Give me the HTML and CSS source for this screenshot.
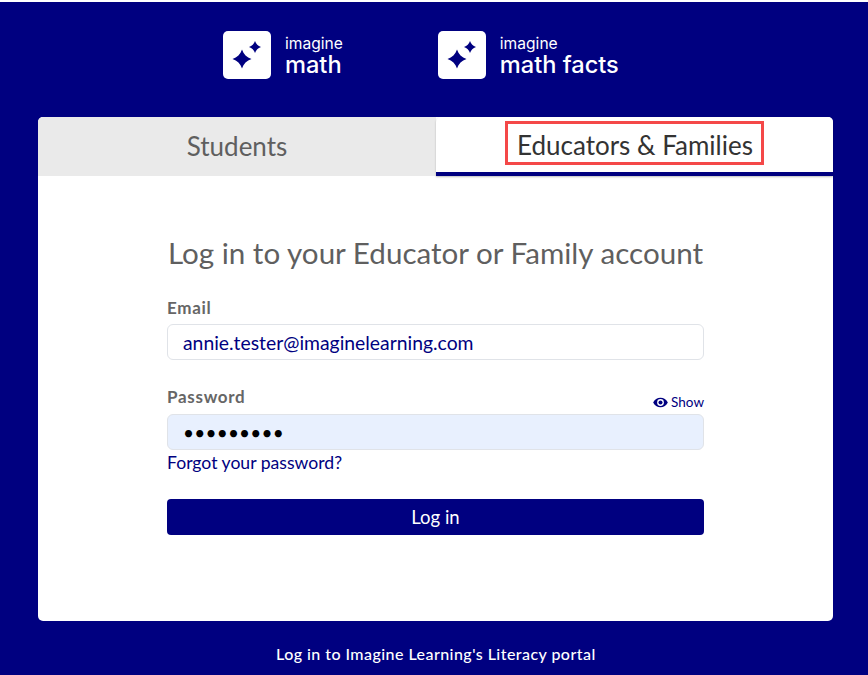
FILE: index.html
```html
<!DOCTYPE html>
<html lang="en">
<head>
<meta charset="utf-8">
<title>Imagine Math Login</title>
<link rel="stylesheet" href="styles.css">
</head>
<body>
<header class="logos">
  <div class="logo">
    <svg class="logo-mark" viewBox="0 0 48 48"><rect width="48" height="48" rx="5" fill="#fff"/><path fill="#000080" d="M19 18.500C20.500 23.200 23.800 26.500 28.500 28C23.800 29.500 20.500 32.800 19 37.500C17.500 32.800 14.200 29.500 9.500 28C14.200 26.500 17.500 23.200 19 18.500zM32 10C33 13 35 15 38 16C35 17 33 19 32 22C31 19 29 17 26 16C29 15 31 13 32 10z"/></svg>
    <div class="logo-text"><span class="logo-small">imagine</span><span class="logo-big">math</span></div>
  </div>
  <div class="logo">
    <svg class="logo-mark" viewBox="0 0 48 48"><rect width="48" height="48" rx="5" fill="#fff"/><path fill="#000080" d="M19 18.500C20.500 23.200 23.800 26.500 28.500 28C23.800 29.500 20.500 32.800 19 37.500C17.500 32.800 14.200 29.500 9.500 28C14.200 26.500 17.500 23.200 19 18.500zM32 10C33 13 35 15 38 16C35 17 33 19 32 22C31 19 29 17 26 16C29 15 31 13 32 10z"/></svg>
    <div class="logo-text"><span class="logo-small">imagine</span><span class="logo-big">math facts</span></div>
  </div>
</header>
<main class="card">
  <nav class="tabs">
    <a class="tab">Students</a>
    <a class="tab tab-active"><span class="highlight">Educators &amp; Families</span></a>
  </nav>
  <form class="form">
    <h1 class="title">Log in to your Educator or Family account</h1>
    <label class="label label-email">Email</label>
    <div class="input">annie.tester@imaginelearning.com</div>
    <div class="pw-row">
      <label class="label">Password</label>
      <a class="show">
        <svg class="eye" viewBox="0 0 16 12"><path fill="#000080" fill-rule="evenodd" d="M8 .8C4.500.8 1.500 3 0 6c1.500 3 4.500 5.200 8 5.200S14.500 9 16 6C14.500 3 11.500.8 8 .8zm0 1.500A3.700 3.700 0 1 1 8 9.700 3.700 3.700 0 0 1 8 2.300z"/><circle cx="8" cy="6" r="2.200" fill="#000080"/></svg>Show</a>
    </div>
    <div class="input input-filled"><span class="dots">•••••••••</span></div>
    <a class="forgot">Forgot your password?</a>
    <button class="submit" type="button">Log in</button>
  </form>
</main>
<footer class="footer">Log in to Imagine Learning's Literacy portal</footer>
</body>
</html>
```
FILE: styles.css
```css
html, body { margin: 0; height: 100%; }
body {
  background: #000080;
  border-top: 2px solid #fff;
  box-sizing: border-box;
  font-family: Lato, "Liberation Sans", sans-serif;
  overflow: hidden;
  display: flex;
  flex-direction: column;
  align-items: flex-start;
  padding-left: 38px;
}
.logos {
  display: flex;
  gap: 95px;
  margin: 29px 0 0 185px;
  height: 48px;
}
.logo { display: flex; align-items: center; gap: 14px; }
.logo-mark { width: 48px; height: 48px; flex: none; }
.logo-text { display: flex; flex-direction: column; margin-top: 4px; color: #fff; font-family: Inter, sans-serif; }
.logo-small { font-size: 15.6px; line-height: 16px; font-weight: 400; }
.logo-big { font-size: 23.6px; line-height: 26px; font-weight: 500; white-space: nowrap; }
.card {
  width: 795px;
  height: 504px;
  margin-top: 38px;
  background: #fff;
  border-radius: 5px;
  flex: none;
}
.tabs { display: flex; height: 59px; }
.tab {
  flex: 1;
  display: flex;
  align-items: center;
  justify-content: center;
  font-size: 26px;
  color: #5f5f5f;
  background: #eaeaea;
  box-sizing: border-box;
  border-radius: 5px 0 0 0;
  padding-bottom: 2px;
}
.tab-active {
  background: #fff;
  color: #333;
  border-bottom: 4px solid #000080;
  border-radius: 5px 5px 0 0;
  flex: 0 0 397px;
  padding-bottom: 0;
  box-shadow: 0 1px 2px rgba(0, 0, 0, .25);
}
.highlight {
  border: 3px solid #f44848;
  padding: 4px 8px 0 9px;
  line-height: 34px;
  margin-bottom: 3px;
}
.form {
  width: 537px;
  margin: 0 auto;
  display: flex;
  flex-direction: column;
}
.title {
  margin: 59px 0 0;
  font-size: 29.6px;
  line-height: 36px;
  font-weight: 400;
  color: #5f5f5f;
  white-space: nowrap;
  text-align: center;
}
.label { font-size: 17px; font-weight: 700; color: #666; line-height: 20px; letter-spacing: .7px; }
.label-email { margin-top: 27px; margin-bottom: 6px; }
.input {
  height: 36px;
  box-sizing: border-box;
  border: 1px solid #e0e3e8;
  border-radius: 6px;
  padding: 0 15px;
  display: flex;
  align-items: center;
  font-size: 19.35px;
  color: #000080;
  background: #fff;
}
.input-filled { background: #e8f0fe; color: #000; }
.dots { font-size: 19px; letter-spacing: .2px; }
.pw-row { display: flex; justify-content: space-between; align-items: flex-end; margin-top: 27px; margin-bottom: 3px; height: 24px; }
.pw-row .label { align-self: flex-start; }
.show { display: flex; align-items: center; gap: 3px; font-size: 13.5px; line-height: 17px; color: #000080; }
.eye { width: 15px; height: 11px; }
.forgot { font-size: 17.6px; line-height: 24px; margin-top: 1px; color: #000080; }
.submit {
  margin-top: 24px;
  height: 36px;
  border: 0;
  border-radius: 4px;
  background: #000080;
  color: #fff;
  font: 400 18.5px Lato, sans-serif;
}
.footer {
  margin: 23px 0 0 238px;
  color: #fff;
  font-size: 16px;
  line-height: 20px;
  letter-spacing: .45px;
  font-weight: 500;
  white-space: nowrap;
}
```
